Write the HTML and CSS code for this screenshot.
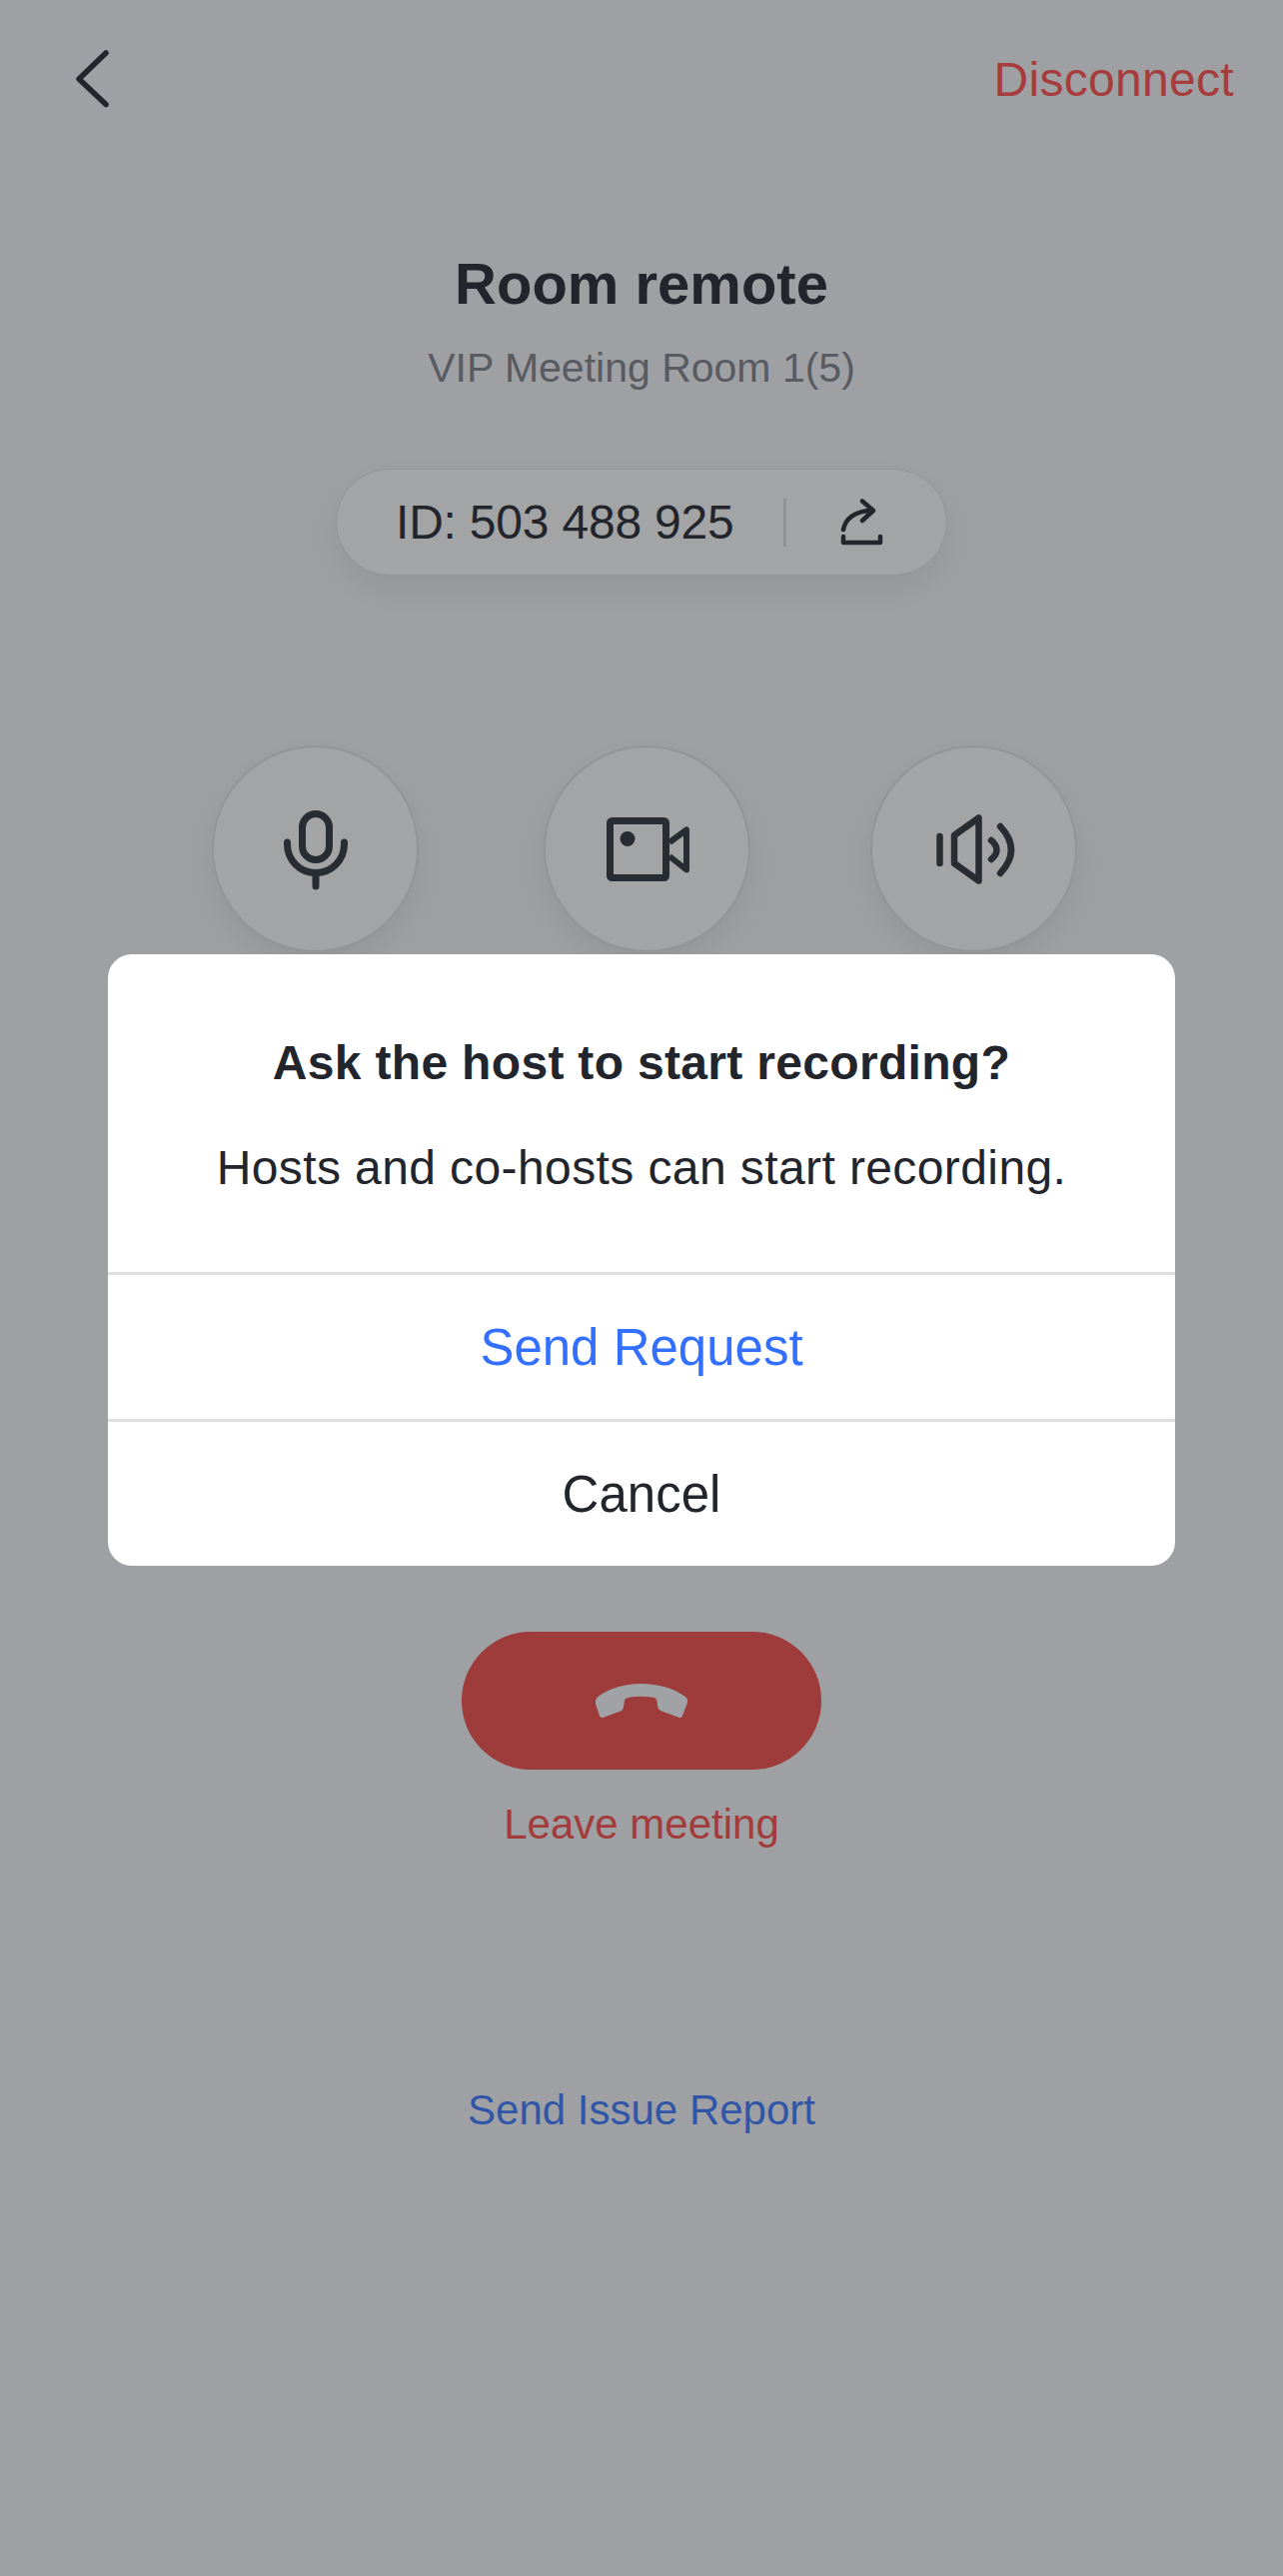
FILE: index.html
```html
<!DOCTYPE html>
<html lang="en">
<head>
<meta charset="utf-8">
<title>Room remote</title>
<link rel="stylesheet" href="styles.css">
</head>
<body>
<main class="page">
  <header class="topbar">
    <svg class="back" width="40" height="66" viewBox="0 0 40 66"><path d="M33 5 6 31 33 56.500" fill="none" stroke="#22252c" stroke-width="5.500" stroke-linecap="round" stroke-linejoin="round"/></svg>
    <span class="disconnect">Disconnect</span>
  </header>
  <h1 class="title">Room remote</h1>
  <p class="subtitle">VIP Meeting Room 1(5)</p>
  <div class="id-pill">
    <span class="id-text">ID: 503 488 925</span>
    <span class="id-divider"></span>
    <svg class="share" width="50" height="52" viewBox="0 0 50 52"><path d="M6 33C8 22 18 14 35 14M25 4.500 36 14 25 24M6 40V46H43V40" fill="none" stroke="#22252c" stroke-width="4.500" stroke-linecap="round" stroke-linejoin="round"/></svg>
  </div>
  <div class="controls">
    <div class="control">
      <svg width="70" height="84" viewBox="0 0 70 84"><g fill="none" stroke="#282c33" stroke-width="7" stroke-linecap="round"><rect x="21.500" y="6.500" width="27" height="46" rx="13.500"/><path d="M6.500 35v2a28.500 28.500 0 0 0 57 0v-2M35 66v13"/></g></svg>
    </div>
    <div class="control">
      <svg width="86" height="64" viewBox="0 0 86 64"><g fill="none" stroke="#282c33" stroke-width="7" stroke-linejoin="round"><rect x="5.500" y="3.500" width="56" height="57" rx="2"/><path d="M65 25 82 12.500V52.500L65 39" stroke-width="6"/></g><circle cx="23" cy="21.500" r="7.500" fill="#282c33"/></svg>
    </div>
    <div class="control">
      <svg width="84" height="76" viewBox="0 0 84 76"><g fill="none" stroke="#282c33" stroke-width="6.500" stroke-linecap="round" stroke-linejoin="round"><path d="M7.500 25V52"/><path d="M46.500 6.500V69.500L22 52V24Z"/><path d="M59 29Q70 38.500 59 48"/><path d="M68 15Q90 38.500 68 62"/></g></svg>
    </div>
  </div>
  <button class="leave" type="button">
    <svg width="92" height="34" viewBox="0 0 92 34"><path d="M2.300 13C13 5 29 0 45.700 0 63 0 79 5 90 13 92 15 92.500 17 92 19L87 32C86 34 85 34.500 84 34L65.700 27.300C63.500 26.500 62.800 25 62.300 23.300L61.300 16.700C61 15 60 14.500 59 14 50 12.300 41 12.300 32.300 14 31 14.500 29.500 15 29 16.700L28 23.300C27.500 25 27 26.500 25.700 27.300L7.300 34C6 34.500 5 34 4 32L0 20C-.3 17 .5 15 2.300 13Z" fill="#a0a2a5"/></svg>
  </button>
  <p class="leave-label">Leave meeting</p>
  <p class="report">Send Issue Report</p>
</main>
<section class="dialog">
  <div class="dialog-body">
    <h2 class="dialog-title">Ask the host to start recording?</h2>
    <p class="dialog-text">Hosts and co-hosts can start recording.</p>
  </div>
  <div class="dialog-action primary">Send Request</div>
  <div class="dialog-action">Cancel</div>
</section>
</body>
</html>
```
FILE: styles.css
```css
* { box-sizing: border-box; }
html, body { margin: 0; padding: 0; }
body {
  width: 1284px;
  height: 2578px;
  position: relative;
  overflow: hidden;
  background: #9fa0a4;
  font-family: "Liberation Sans", Arial, sans-serif;
  color: #22252c;
}
.page { display: flex; flex-direction: column; align-items: center; }
.topbar {
  width: 100%;
  height: 244px;
  padding: 48px 49px 0 73px;
  display: flex;
  justify-content: space-between;
  align-items: flex-start;
}
.disconnect { font-size: 48px; line-height: 64px; color: #a63c3c; letter-spacing: .3px; }
.title {
  margin: 0;
  font-size: 58px;
  line-height: 80px;
  font-weight: 700;
  height: 80px;
}
.subtitle { margin: 16px 0 0; font-size: 41px; line-height: 56px; color: #585b62; }
.id-pill {
  margin-top: 73px;
  width: 612px;
  height: 107px;
  border-radius: 54px;
  background: #a3a4a6;
  border: 1px solid #939497;
  box-shadow: 0 14px 34px rgba(0, 0, 0, .07);
  display: flex;
  align-items: center;
  padding-left: 59px;
}
.id-text { font-size: 48px; line-height: 60px; width: 388px; white-space: nowrap; letter-spacing: -.2px; }
.id-divider { width: 3px; height: 48px; background: #919295; }
.share { margin-left: 51px; }
.controls {
  margin-top: 170px;
  width: 100%;
  padding-left: 212px;
  display: grid;
  grid-template-columns: 332px 327px 207px;
}
.control {
  width: 207px;
  height: 207px;
  border-radius: 50%;
  background: #a3a4a6;
  border: 2px solid #939497;
  box-shadow: 0 14px 34px rgba(0, 0, 0, .07);
  display: flex;
  align-items: center;
  justify-content: center;
}
.leave {
  margin-top: 680px;
  width: 360px;
  height: 138px;
  border: 0;
  padding: 0;
  border-radius: 69px;
  background: #9e3b3b;
  display: flex;
  align-items: center;
  justify-content: center;
}
.leave-label { margin: 30px 0 0; font-size: 42px; line-height: 50px; color: #a33b3b; }
.report { margin: 236px 0 0; font-size: 42px; line-height: 50px; color: #3056a8; }
.dialog {
  position: absolute;
  left: 108px;
  top: 955px;
  width: 1068px;
  height: 612px;
  border-radius: 24px;
  background: #fff;
  overflow: hidden;
  text-align: center;
  display: flex;
  flex-direction: column;
}
.dialog-body { height: 318px; padding-top: 79px; }
.dialog-title { margin: 0; font-size: 48px; line-height: 60px; font-weight: 700; letter-spacing: .32px; }
.dialog-text { margin: 45px 0 0; font-size: 48px; line-height: 60px; letter-spacing: .4px; }
.dialog-action {
  height: 147px;
  border-top: 3px solid #dddee0;
  font-size: 51px;
  line-height: 146px;
}
.primary { color: #3370ff; }
```
